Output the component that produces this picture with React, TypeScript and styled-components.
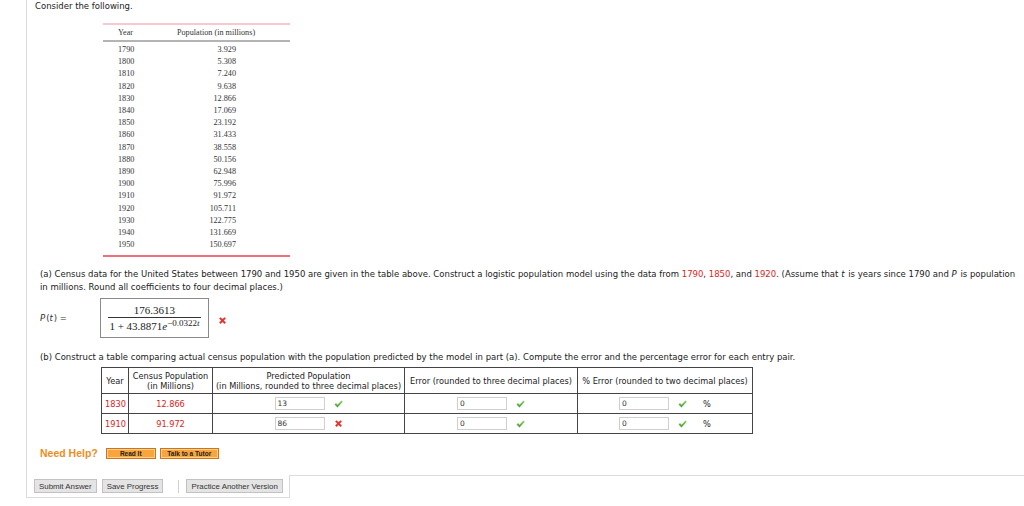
import React from "react"
import styled, { createGlobalStyle } from "styled-components"

const GlobalStyle = createGlobalStyle`
  html, body {
    margin: 0;
    padding: 0;
    background: #ffffff;
  }
  body {
    font-family: "DejaVu Sans", Verdana, sans-serif;
    font-size: 8.5px;
    color: #222222;
  }
`

const census = [
  ["1790", "3.929"],
  ["1800", "5.308"],
  ["1810", "7.240"],
  ["1820", "9.638"],
  ["1830", "12.866"],
  ["1840", "17.069"],
  ["1850", "23.192"],
  ["1860", "31.433"],
  ["1870", "38.558"],
  ["1880", "50.156"],
  ["1890", "62.948"],
  ["1900", "75.996"],
  ["1910", "91.972"],
  ["1920", "105.711"],
  ["1930", "122.775"],
  ["1940", "131.669"],
  ["1950", "150.697"],
]

interface AnswerRow {
  year: string
  actual: string
  predicted: string
  predictedOk: boolean
  error: string
  percent: string
}

const answers: AnswerRow[] = [
  { year: "1830", actual: "12.866", predicted: "13", predictedOk: true, error: "0", percent: "0" },
  { year: "1910", actual: "91.972", predicted: "86", predictedOk: false, error: "0", percent: "0" },
]

const Check = () => (
  <S.Mark width="9" height="8" viewBox="0 0 18 16">
    <defs>
      <linearGradient id="ck" x1="0" y1="0" x2="0" y2="1">
        <stop offset="0" stopColor="#8fd36a" />
        <stop offset="1" stopColor="#3f9e2e" />
      </linearGradient>
    </defs>
    <path d="M1 9 L4 6 L7 9.5 L15 1 L17.5 3.5 L7 15 Z" fill="url(#ck)" />
  </S.Mark>
)

const Cross = () => (
  <S.Mark width="9" height="9" viewBox="0 0 16 16">
    <path
      d="M2 4.5 L4.5 2 L8 5.5 L11.5 2 L14 4.5 L10.5 8 L14 11.5 L11.5 14 L8 10.5 L4.5 14 L2 11.5 L5.5 8 Z"
      fill="#e8352f"
    />
  </S.Mark>
)

const AnswerCell: React.FC<{ value: string; ok: boolean; suffix?: string }> = ({ value, ok, suffix }) => (
  <S.AnswerGroup>
    <S.Input value={value} readOnly />
    {ok ? <Check /> : <Cross />}
    {suffix && <S.Suffix>{suffix}</S.Suffix>}
  </S.AnswerGroup>
)

const App: React.FC = () => {
  return (
    <>
      <GlobalStyle />
      <S.Frame>
        <S.Content>
          <S.Intro>Consider the following.</S.Intro>

          <S.DataTable>
            <thead>
              <tr>
                <S.DataHead>Year</S.DataHead>
                <S.DataHead $center>Population (in millions)</S.DataHead>
              </tr>
            </thead>
            <tbody>
              {census.map(([year, pop], i) => (
                <tr key={year}>
                  <S.DataCell $first={i === 0} $last={i === census.length - 1}>
                    {year}
                  </S.DataCell>
                  <S.DataCell $num $first={i === 0} $last={i === census.length - 1}>
                    {pop}
                  </S.DataCell>
                </tr>
              ))}
            </tbody>
          </S.DataTable>

          <S.Part $top={11}>
            <S.Para>
              <S.Line>
                (a) Census data for the United States between 1790 and 1950 are given in the table above. Construct a
                logistic population model using the data from <S.Red>1790</S.Red>, <S.Red>1850</S.Red>, and{" "}
                <S.Red>1920</S.Red>. (Assume that <S.Var>t</S.Var> is years since 1790 and <S.Var>P</S.Var> is
                population
              </S.Line>
              <S.Line>in millions. Round all coefficients to four decimal places.)</S.Line>
            </S.Para>
            <S.FormulaRow>
              <S.Label>
                <S.Var>P</S.Var>(<S.Var>t</S.Var>) =
              </S.Label>
              <S.FormulaBox>
                <S.Fraction>
                  <S.Numer>176.3613</S.Numer>
                  <S.Denom>
                    1 + 43.8871<i>e</i>
                    <S.Sup>
                      −0.0322<i>t</i>
                    </S.Sup>
                  </S.Denom>
                </S.Fraction>
              </S.FormulaBox>
              <S.MarkSlot>
                <Cross />
              </S.MarkSlot>
            </S.FormulaRow>
          </S.Part>

          <S.Part $top={13}>
            <S.Para>
              <S.Line>
                (b) Construct a table comparing actual census population with the population predicted by the model in
                part (a). Compute the error and the percentage error for each entry pair.
              </S.Line>
            </S.Para>
            <S.AnswerTable>
              <colgroup>
                <col style={{ width: 27 }} />
                <col style={{ width: 84 }} />
                <col style={{ width: 192 }} />
                <col style={{ width: 173 }} />
                <col style={{ width: 175 }} />
              </colgroup>
              <thead>
                <tr>
                  <S.HeadCell>Year</S.HeadCell>
                  <S.HeadCell>
                    Census Population
                    <br />
                    (in Millions)
                  </S.HeadCell>
                  <S.HeadCell>
                    Predicted Population
                    <br />
                    (in Millions, rounded to three decimal places)
                  </S.HeadCell>
                  <S.HeadCell>Error (rounded to three decimal places)</S.HeadCell>
                  <S.HeadCell>% Error (rounded to two decimal places)</S.HeadCell>
                </tr>
              </thead>
              <tbody>
                {answers.map((r) => (
                  <tr key={r.year}>
                    <S.BodyCell $red $left>
                      {r.year}
                    </S.BodyCell>
                    <S.BodyCell $red>{r.actual}</S.BodyCell>
                    <S.BodyCell>
                      <AnswerCell value={r.predicted} ok={r.predictedOk} />
                    </S.BodyCell>
                    <S.BodyCell>
                      <AnswerCell value={r.error} ok />
                    </S.BodyCell>
                    <S.BodyCell>
                      <AnswerCell value={r.percent} ok suffix="%" />
                    </S.BodyCell>
                  </tr>
                ))}
              </tbody>
            </S.AnswerTable>
          </S.Part>

          <S.HelpRow>
            <S.HelpLabel>Need Help?</S.HelpLabel>
            <S.HelpButton $w={50}>Read It</S.HelpButton>
            <S.HelpButton $w={59}>Talk to a Tutor</S.HelpButton>
          </S.HelpRow>
        </S.Content>

        <S.Footer>
          <S.ButtonBar>
            <S.GrayButton>Submit Answer</S.GrayButton>
            <S.GrayButton>Save Progress</S.GrayButton>
            <S.Divider />
            <S.GrayButton>Practice Another Version</S.GrayButton>
          </S.ButtonBar>
          <S.FooterRest />
        </S.Footer>
      </S.Frame>
    </>
  )
}

const S = {
  Frame: styled.div`
    margin-left: 26px;
    width: 998px;
    border-left: 1px solid #dcdcdc;
  `,
  Content: styled.div`
    padding: 1px 0 0 8px;
  `,
  Intro: styled.div`
    font-size: 8.5px;
    line-height: 10px;
    color: #222;
  `,
  DataTable: styled.table`
    margin: 12px 0 0 68px;
    width: 187px;
    border-collapse: collapse;
    font-family: "Liberation Serif", "Times New Roman", serif;
    font-size: 8.2px;
    color: #333;
    border-top: 2px solid #f6c9cf;
    border-bottom: 2px solid #ee6f80;
  `,
  DataHead: styled.th<{ $center?: boolean }>`
    font-weight: normal;
    height: 15px;
    padding: ${(p) => (p.$center ? "0 10px 0 0" : "0 0 0 15px")};
    text-align: ${(p) => (p.$center ? "center" : "left")};
    border-bottom: 2px solid #b4b4b4;
  `,
  DataCell: styled.td<{ $num?: boolean; $first?: boolean; $last?: boolean }>`
    height: 12.2px;
    line-height: 12.2px;
    padding: ${(p) => (p.$num ? "0 54px 0 0" : "0 0 0 15px")};
    padding-top: ${(p) => (p.$first ? "2px" : "0")};
    padding-bottom: ${(p) => (p.$last ? "4px" : "0")};
    text-align: ${(p) => (p.$num ? "right" : "left")};
  `,
  Part: styled.div<{ $top: number }>`
    margin-top: ${(p) => p.$top}px;
    padding-left: 5px;
  `,
  Para: styled.div`
    line-height: 13px;
    font-size: 8.5px;
    color: #222;
  `,
  Line: styled.div`
    white-space: nowrap;
  `,
  Var: styled.i`
    font-style: italic;
    padding-right: 1px;
  `,
  Red: styled.span`
    color: #e21b1b;
  `,
  FormulaRow: styled.div`
    display: flex;
    align-items: center;
    margin-top: 4px;
  `,
  Label: styled.span`
    width: 60px;
    font-size: 8.5px;
    color: #333;
  `,
  FormulaBox: styled.div`
    width: 107px;
    height: 38px;
    border: 1px solid #8a8a8a;
    display: flex;
    align-items: center;
    justify-content: center;
  `,
  Fraction: styled.div`
    display: inline-flex;
    flex-direction: column;
    align-items: center;
    font-family: "Liberation Serif", "Times New Roman", serif;
    font-size: 11px;
    color: #222;
  `,
  Numer: styled.span`
    padding: 0 2px 1px;
    line-height: 12px;
  `,
  Denom: styled.span`
    border-top: 1px solid #333;
    padding: 2px 1px 0;
    line-height: 12px;
    white-space: nowrap;
  `,
  Sup: styled.sup`
    font-size: 9px;
    vertical-align: 4px;
    line-height: 0;
  `,
  MarkSlot: styled.span`
    margin-left: 9px;
    display: inline-flex;
    margin-top: 4px;
  `,
  Mark: styled.svg`
    display: block;
    flex: none;
  `,
  AnswerTable: styled.table`
    margin: 3px 0 0 61px;
    border-collapse: collapse;
    table-layout: fixed;
    width: 651px;
    font-size: 8.2px;
    color: #222;
  `,
  HeadCell: styled.th`
    font-weight: normal;
    height: 25px;
    padding: 0;
    line-height: 10px;
    text-align: center;
    border: 1px solid #444;
    white-space: nowrap;
  `,
  BodyCell: styled.td<{ $red?: boolean; $left?: boolean }>`
    height: 19px;
    padding: 0 0 0 ${(p) => (p.$left ? "3px" : "0")};
    text-align: ${(p) => (p.$left ? "left" : "center")};
    color: ${(p) => (p.$red ? "#e21b1b" : "#222")};
    border: 1px solid #444;
  `,
  AnswerGroup: styled.div`
    display: inline-flex;
    align-items: center;
    vertical-align: middle;
    gap: 9px;
  `,
  Input: styled.input`
    width: 50px;
    height: 13px;
    box-sizing: border-box;
    border: 1px solid #cfcfcf;
    padding: 0 2px;
    font-family: "DejaVu Sans", sans-serif;
    font-size: 7.5px;
    color: #333;
    background: #fff;
    outline: none;
  `,
  Suffix: styled.span`
    margin-left: 7px;
    font-size: 8.2px;
  `,
  HelpRow: styled.div`
    display: flex;
    align-items: center;
    gap: 4px;
    margin-top: 13px;
    padding-left: 5px;
  `,
  HelpLabel: styled.span`
    font-family: "Liberation Sans", Arial, sans-serif;
    font-weight: bold;
    font-size: 10.5px;
    color: #f08c1e;
    margin-right: 4px;
  `,
  HelpButton: styled.span<{ $w: number }>`
    width: ${(p) => p.$w}px;
    height: 11px;
    box-sizing: border-box;
    display: inline-flex;
    align-items: center;
    justify-content: center;
    background: #f9a53c;
    border: 1px solid #d0731a;
    box-shadow: inset 0 0 0 1px #fdd08e;
    font-family: "Liberation Sans", Arial, sans-serif;
    font-weight: bold;
    font-size: 6.5px;
    color: #222;
  `,
  Footer: styled.div`
    display: flex;
    margin-top: 16px;
  `,
  ButtonBar: styled.div`
    display: flex;
    align-items: center;
    gap: 5px;
    padding: 4px 6px 4px 7px;
    border-right: 1px solid #dcdcdc;
    border-bottom: 1px solid #dcdcdc;
  `,
  GrayButton: styled.span`
    height: 14px;
    box-sizing: border-box;
    display: inline-flex;
    align-items: center;
    padding: 0 4px;
    background: #e4e4e4;
    border: 1px solid #c2c2c2;
    font-family: "Liberation Sans", Arial, sans-serif;
    font-size: 7.9px;
    color: #333;
  `,
  Divider: styled.span`
    width: 1px;
    height: 13px;
    background: #cfcfcf;
    margin: 0 2px 0 10px;
  `,
  FooterRest: styled.div`
    flex: 1;
    border-top: 1px solid #dcdcdc;
  `,
}

export default App
